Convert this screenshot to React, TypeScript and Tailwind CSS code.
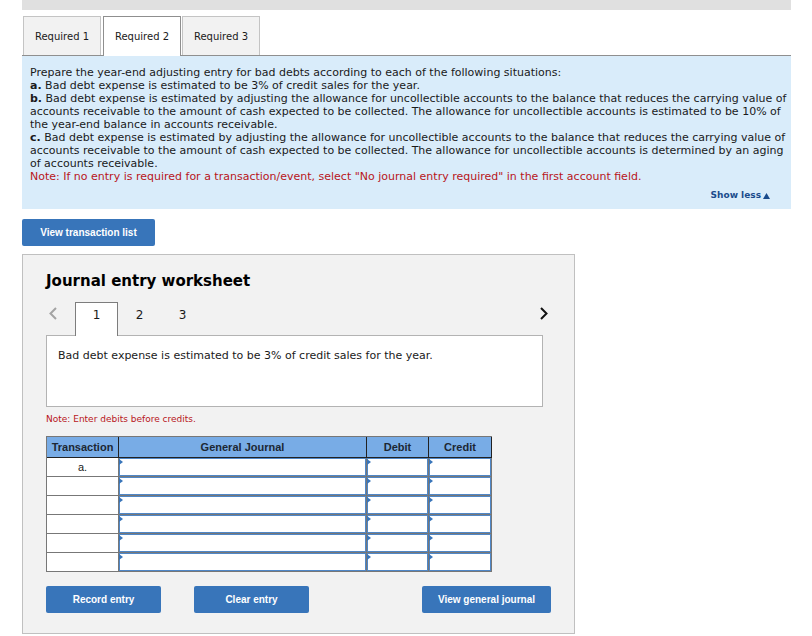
const requirements = ["Required 1", "Required 2", "Required 3"];
const entries = ["1", "2", "3"];
const rows = ["a.", "", "", "", "", ""];
const fields = ["General Journal", "Debit", "Credit"];

const actionButton =
  "h-[27px] rounded-xs bg-[#3875ba] text-center font-['Liberation_Sans',Arial,sans-serif] text-[10px] font-bold text-white";

function RequirementTabs() {
  return (
    <div role="tablist" className="flex gap-px border-b border-[#8f8f8f] pl-px">
      {requirements.map((name, i) => (
        <button
          key={name}
          type="button"
          role="tab"
          aria-selected={i === 1}
          className={
            i === 1
              ? "-mb-px ml-px h-10 w-[78px] border border-b-0 border-[#8f8f8f] bg-white text-[10px]"
              : "h-[39px] w-[78px] border border-b-0 border-[#c4c4c4] bg-[#f2f2f2] text-[10px]"
          }
        >
          {name}
        </button>
      ))}
    </div>
  );
}

function Instructions() {
  return (
    <section className="bg-[#d9ecfa] pt-[10px] pb-[7px] pl-2 leading-[13px]">
      <p>Prepare the year-end adjusting entry for bad debts according to each of the following situations:</p>
      <p>
        <b>a.</b> Bad debt expense is estimated to be 3% of credit sales for the year.
      </p>
      <p>
        <b>b.</b> Bad debt expense is estimated by adjusting the allowance for uncollectible accounts to the
        balance that reduces the carrying value of accounts receivable to the amount of cash expected to be
        collected. The allowance for uncollectible accounts is estimated to be 10% of the year-end balance in
        accounts receivable.
      </p>
      <p>
        <b>c.</b> Bad debt expense is estimated by adjusting the allowance for uncollectible accounts to the
        balance that reduces the carrying value of accounts receivable to the amount of cash expected to be
        collected. The allowance for uncollectible accounts is determined by an aging of accounts receivable.
      </p>
      <p className="text-[#b8151b]">
        Note: If no entry is required for a transaction/event, select "No journal entry required" in the first
        account field.
      </p>
      <div className="mt-[6px] flex justify-end pr-[21px]">
        <button type="button" className="flex items-center gap-[2px] text-[9px] leading-[13px] font-bold text-[#1a4b8c]">
          Show less
          <svg width="7" height="6" viewBox="0 0 7 6" aria-hidden="true">
            <path d="M3.5 0 7 6H0z" fill="currentColor" />
          </svg>
        </button>
      </div>
    </section>
  );
}

function Chevron({ d }: { d: string }) {
  return (
    <svg width="8" height="13" viewBox="0 0 8 13" fill="none" stroke="currentColor" strokeWidth="2" aria-hidden="true">
      <path d={d} />
    </svg>
  );
}

function EntryNav() {
  return (
    <nav className="flex h-[33px] items-stretch">
      <button type="button" aria-label="Previous entry" className="mb-[10px] flex w-[29px] items-center pl-[3px] text-[#a3a3a3]">
        <Chevron d="M7 1 1.5 6.5 7 12" />
      </button>
      {entries.map((n, i) => (
        <button
          key={n}
          type="button"
          className={
            i === 0
              ? "relative -mb-px w-[43px] border border-b-0 border-[#7d7d7d] bg-white pb-[9px] text-[12px]"
              : "w-[43px] pb-2 text-[12px]"
          }
        >
          {n}
        </button>
      ))}
      <button type="button" aria-label="Next entry" className="mb-[10px] ml-auto flex items-center pr-[3px] text-[#111111]">
        <Chevron d="M1 1 6.5 6.5 1 12" />
      </button>
    </nav>
  );
}

function JournalTable() {
  return (
    <table className="w-full max-w-[446px] table-fixed border-separate border-spacing-0 border-t border-l border-[#777777] bg-white font-['Liberation_Sans',Arial,sans-serif] text-[11px]">
      <colgroup>
        <col className="w-[72px]" />
        <col />
        <col className="w-[62px]" />
        <col className="w-[63px]" />
      </colgroup>
      <thead>
        <tr className="h-[21px]">
          {["Transaction", ...fields].map((name) => (
            <th key={name} className="border-r border-b border-[#222222] bg-[#78ace6] p-0 text-[#1c2733]">
              {name}
            </th>
          ))}
        </tr>
      </thead>
      <tbody>
        {rows.map((label, r) => (
          <tr key={r} className="h-[19px]">
            <td className="border-r border-b border-[#777777] p-0 text-center">{label}</td>
            {fields.map((field) => (
              <td key={field} className="relative border-r border-b border-[#777777] p-0">
                <input
                  type="text"
                  aria-label={`${field}, row ${r + 1}`}
                  className="block h-[18px] w-full border border-[#4f87c7] px-1"
                />
                <svg width="4" height="6" viewBox="0 0 4 6" aria-hidden="true" className="absolute top-px left-0">
                  <path d="M0 0 4 3 0 6z" fill="#3875ba" />
                </svg>
              </td>
            ))}
          </tr>
        ))}
      </tbody>
    </table>
  );
}

export default function App() {
  return (
    <main className="bg-white pr-[21px] pb-[2px] pl-[22px] font-['DejaVu_Sans',Verdana,sans-serif] text-[11px] text-[#1a1a1a]">
      <div className="mb-[6px] h-[10px] bg-[#e0e0e0]" />
      <RequirementTabs />
      <Instructions />
      <button type="button" className={`${actionButton} mt-[10px] block w-[133px]`}>
        View transaction list
      </button>
      <section className="mt-2 w-full max-w-[553px] border border-[#c0c0c0] bg-[#f2f2f2] px-[23px] pt-4 pb-5">
        <h1 className="text-[15px] leading-5 font-bold text-black">Journal entry worksheet</h1>
        <div className="mt-[11px] max-w-[505px]">
          <EntryNav />
        </div>
        <div className="h-[72px] max-w-[497px] border border-[#b3b3b3] bg-white px-[11px] pt-3 leading-4">
          Bad debt expense is estimated to be 3% of credit sales for the year.
        </div>
        <p className="mt-[5px] mb-[10px] text-[9px] leading-[14px] text-[#b8151b]">Note: Enter debits before credits.</p>
        <JournalTable />
        <div className="mt-[14px] flex max-w-[505px]">
          <button type="button" className={`${actionButton} w-[115px]`}>
            Record entry
          </button>
          <button type="button" className={`${actionButton} ml-[33px] w-[115px]`}>
            Clear entry
          </button>
          <button type="button" className={`${actionButton} ml-auto w-[129px]`}>
            View general journal
          </button>
        </div>
      </section>
    </main>
  );
}
